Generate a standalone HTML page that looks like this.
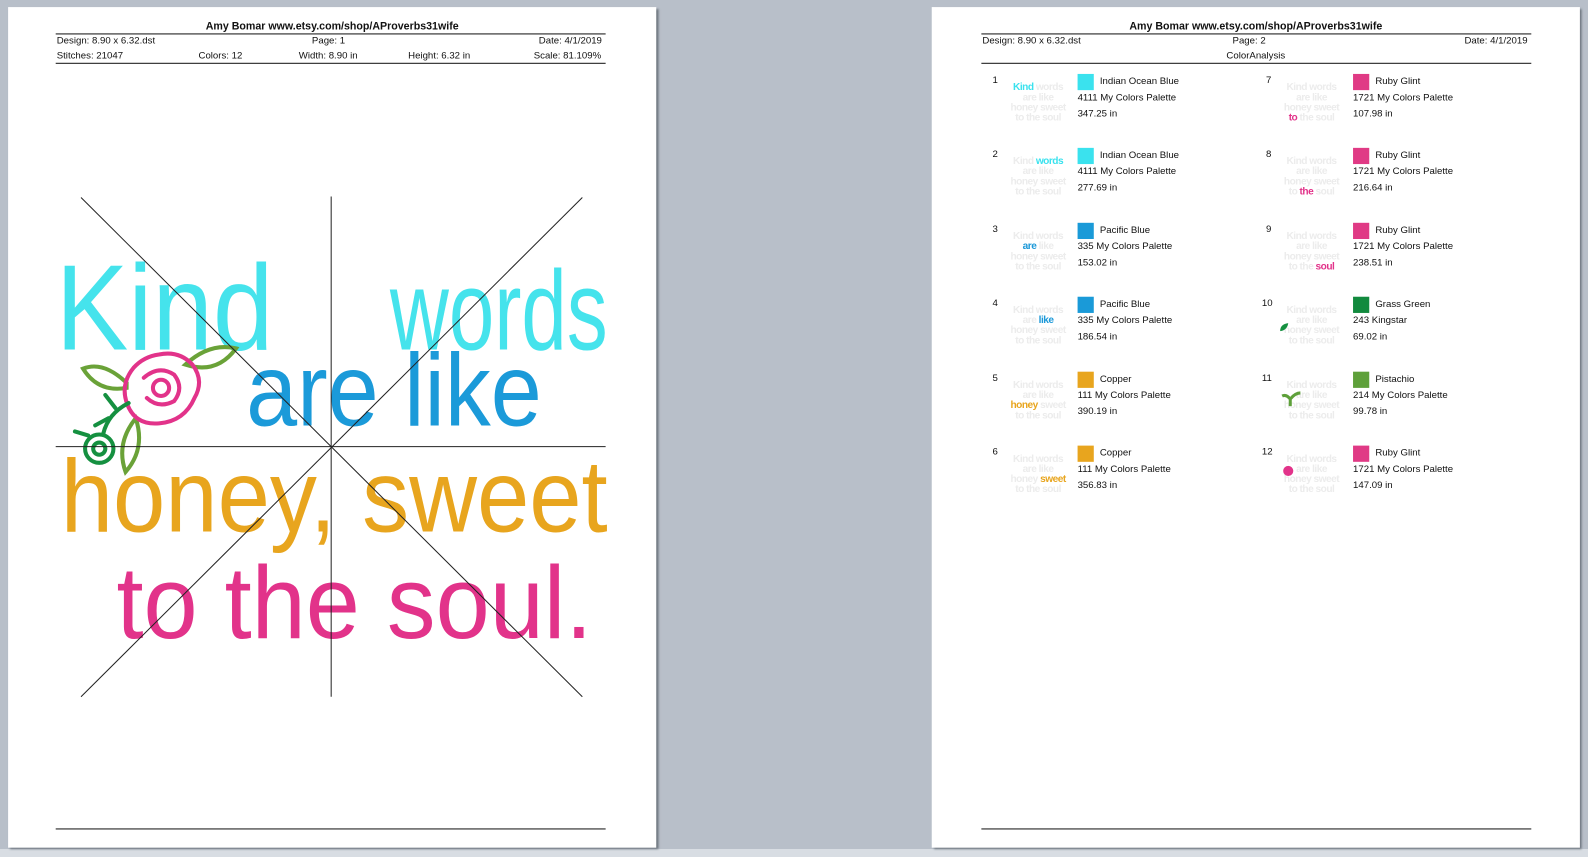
<!DOCTYPE html>
<html><head><meta charset="utf-8"><style>
*{margin:0;padding:0;box-sizing:border-box}
body{width:1588px;height:857px;background:#b8bfc9;position:relative;overflow:hidden;font-family:"Liberation Sans",Arial,sans-serif;color:#111}
#wrap{position:absolute;left:0;top:0;width:1568px;height:846px;transform:scale(1.01276);transform-origin:0 0}
.page{position:absolute;top:7px;width:640px;height:830px;background:#fff;box-shadow:2px 2px 2px #6b737c}
.t{position:absolute;font-size:9.5px;white-space:nowrap}
.hl{position:absolute;height:1px;background:#111}
.sw{position:absolute;width:16px;height:16px}
.thumb{position:absolute;width:78px;font-family:"Liberation Sans",sans-serif;font-size:10px;line-height:10px;color:#ececec;text-align:center;font-weight:bold;letter-spacing:-0.5px}
</style></head><body>
<div style="position:absolute;left:0;top:849px;width:1588px;height:8px;background:#d8dde3"></div>
<div id="wrap">
<div class="page" style="left:8px">
  <div class="t" style="left:0;width:640px;text-align:center;top:13px;font-weight:bold;font-size:10.5px">Amy Bomar www.etsy.com/shop/AProverbs31wife</div>
  <div class="hl" style="left:47px;width:543px;top:26px"></div>
  <div class="t" style="left:48px;top:28px">Design: 8.90 x 6.32.dst</div>
  <div class="t" style="left:300px;top:28px">Page: 1</div>
  <div class="t" style="left:524px;top:28px">Date: 4/1/2019</div>
  <div class="t" style="left:48px;top:43px">Stitches: 21047</div>
  <div class="t" style="left:188px;top:43px">Colors: 12</div>
  <div class="t" style="left:287px;top:43px">Width: 8.90 in</div>
  <div class="t" style="left:395px;top:43px">Height: 6.32 in</div>
  <div class="t" style="left:519px;top:43px">Scale: 81.109%</div>
  <div class="hl" style="left:47px;width:543px;top:55px"></div>
  <div class="hl" style="left:47px;width:543px;top:811px"></div>
  <svg style="position:absolute;left:0;top:0" width="640" height="830">
    <g font-family="Liberation Sans, sans-serif" font-weight="normal">
      <text x="47" y="338" font-size="120" fill="#45e3ec" textLength="215" lengthAdjust="spacingAndGlyphs">Kind</text>
      <text x="377" y="338" font-size="112" fill="#45e3ec" textLength="215" lengthAdjust="spacingAndGlyphs">words</text>
      <text x="235" y="413" font-size="102" fill="#1b9ad9" textLength="292" lengthAdjust="spacingAndGlyphs">are like</text>
      <text x="52" y="518" font-size="102" fill="#e8a51e" textLength="540" lengthAdjust="spacingAndGlyphs">honey, sweet</text>
      <text x="107" y="623" font-size="102" fill="#e2338a" textLength="470" lengthAdjust="spacingAndGlyphs">to the soul.</text>
    </g>
  </svg>
  <svg style="position:absolute;left:34px;top:331px" width="220" height="140" viewBox="0 0 220 140">
    <g fill="none" stroke-width="4" stroke-linecap="round">
      <path d="M141 22 Q165 0 191 6 Q172 32 141 22Z" stroke="#6aa238"/>
      <path d="M83 40 Q60 18 40 26 Q55 50 83 45Z" stroke="#6aa238"/>
      <path d="M92 75 Q72 100 82 128 Q102 105 92 75Z" stroke="#6aa238"/>
      <path d="M115 12 Q135 8 148 22 Q160 38 150 55 Q140 78 115 80 Q92 82 84 62 Q76 42 90 25 Q100 14 115 12Z" stroke="#e2338a"/>
      <path d="M100 35 Q115 22 130 32 Q140 45 130 58 Q115 66 103 55" stroke="#e2338a"/>
      <circle cx="117" cy="45" r="8" stroke="#e2338a"/>
      <path d="M85 60 Q65 70 60 90" stroke="#159040"/>
      <circle cx="56" cy="105" r="14" stroke="#159040"/>
      <circle cx="56" cy="105" r="6" stroke="#159040"/>
      <path d="M72 65 L62 52 M65 75 L52 82 M45 92 L32 88" stroke="#159040"/>
    </g>
  </svg>
  <svg style="position:absolute;left:0;top:0" width="640" height="830">
    <g stroke="#222" stroke-width="1">
      <line x1="319" y1="187" x2="319" y2="681"/>
      <line x1="47" y1="434" x2="590" y2="434"/>
      <line x1="72" y1="188" x2="567" y2="681"/>
      <line x1="567" y1="188" x2="72" y2="681"/>
    </g>
  </svg>
</div>
<div class="page" style="left:920px">
  <div class="t" style="left:0;width:640px;text-align:center;top:13px;font-weight:bold;font-size:10.5px">Amy Bomar www.etsy.com/shop/AProverbs31wife</div>
  <div class="hl" style="left:49px;width:543px;top:26px"></div>
  <div class="t" style="left:50px;top:28px">Design: 8.90 x 6.32.dst</div>
  <div class="t" style="left:297px;top:28px">Page: 2</div>
  <div class="t" style="left:526px;top:28px">Date: 4/1/2019</div>
  <div class="t" style="left:0;width:640px;text-align:center;top:43px">ColorAnalysis</div>
  <div class="hl" style="left:49px;width:543px;top:55px"></div>
  <div class="hl" style="left:49px;width:543px;top:811px"></div>
</div>
<div style="position:absolute;left:920px;top:7px">
<div class="t" style="left:60px;top:67px">1</div><div class="thumb" style="left:66px;top:75px"><span style="color:#3ae2ee">Kind</span> words<br>are like<br>honey sweet<br>to the soul</div><div class="sw" style="left:144px;top:66px;background:#3ae2ee"></div><div class="t" style="left:166px;top:68px">Indian Ocean Blue</div><div class="t" style="left:144px;top:84px">4111 My Colors Palette</div><div class="t" style="left:144px;top:100px">347.25 in</div>
<div class="t" style="left:60px;top:140px">2</div><div class="thumb" style="left:66px;top:148px">Kind <span style="color:#3ae2ee">words</span><br>are like<br>honey sweet<br>to the soul</div><div class="sw" style="left:144px;top:139px;background:#3ae2ee"></div><div class="t" style="left:166px;top:141px">Indian Ocean Blue</div><div class="t" style="left:144px;top:157px">4111 My Colors Palette</div><div class="t" style="left:144px;top:173px">277.69 in</div>
<div class="t" style="left:60px;top:214px">3</div><div class="thumb" style="left:66px;top:222px">Kind words<br><span style="color:#1b98d8">are</span> like<br>honey sweet<br>to the soul</div><div class="sw" style="left:144px;top:213px;background:#1a9ad8"></div><div class="t" style="left:166px;top:215px">Pacific Blue</div><div class="t" style="left:144px;top:231px">335 My Colors Palette</div><div class="t" style="left:144px;top:247px">153.02 in</div>
<div class="t" style="left:60px;top:287px">4</div><div class="thumb" style="left:66px;top:295px">Kind words<br>are <span style="color:#1b98d8">like</span><br>honey sweet<br>to the soul</div><div class="sw" style="left:144px;top:286px;background:#1a9ad8"></div><div class="t" style="left:166px;top:288px">Pacific Blue</div><div class="t" style="left:144px;top:304px">335 My Colors Palette</div><div class="t" style="left:144px;top:320px">186.54 in</div>
<div class="t" style="left:60px;top:361px">5</div><div class="thumb" style="left:66px;top:369px">Kind words<br>are like<br><span style="color:#e8a51e">honey</span> sweet<br>to the soul</div><div class="sw" style="left:144px;top:360px;background:#e8a51e"></div><div class="t" style="left:166px;top:362px">Copper</div><div class="t" style="left:144px;top:378px">111 My Colors Palette</div><div class="t" style="left:144px;top:394px">390.19 in</div>
<div class="t" style="left:60px;top:434px">6</div><div class="thumb" style="left:66px;top:442px">Kind words<br>are like<br>honey <span style="color:#e8a51e">sweet</span><br>to the soul</div><div class="sw" style="left:144px;top:433px;background:#e8a51e"></div><div class="t" style="left:166px;top:435px">Copper</div><div class="t" style="left:144px;top:451px">111 My Colors Palette</div><div class="t" style="left:144px;top:467px">356.83 in</div>

<div class="t" style="left:330px;top:67px">7</div><div class="thumb" style="left:336px;top:75px">Kind words<br>are like<br>honey sweet<br><span style="color:#e2338a">to</span> the soul</div><div class="sw" style="left:416px;top:66px;background:#e03a85"></div><div class="t" style="left:438px;top:68px">Ruby Glint</div><div class="t" style="left:416px;top:84px">1721 My Colors Palette</div><div class="t" style="left:416px;top:100px">107.98 in</div>
<div class="t" style="left:330px;top:140px">8</div><div class="thumb" style="left:336px;top:148px">Kind words<br>are like<br>honey sweet<br>to <span style="color:#e2338a">the</span> soul</div><div class="sw" style="left:416px;top:139px;background:#e03a85"></div><div class="t" style="left:438px;top:141px">Ruby Glint</div><div class="t" style="left:416px;top:157px">1721 My Colors Palette</div><div class="t" style="left:416px;top:173px">216.64 in</div>
<div class="t" style="left:330px;top:214px">9</div><div class="thumb" style="left:336px;top:222px">Kind words<br>are like<br>honey sweet<br>to the <span style="color:#e2338a">soul</span></div><div class="sw" style="left:416px;top:213px;background:#e03a85"></div><div class="t" style="left:438px;top:215px">Ruby Glint</div><div class="t" style="left:416px;top:231px">1721 My Colors Palette</div><div class="t" style="left:416px;top:247px">238.51 in</div>
<div class="t" style="left:326px;top:287px">10</div><div class="thumb" style="left:336px;top:295px">Kind words<br>are like<br>honey sweet<br>to the soul</div><svg style="position:absolute;left:342px;top:310px" width="12" height="12"><path d="M2 10 Q2 3 10 2 Q9 9 2 10Z" fill="#159040"/></svg><div class="sw" style="left:416px;top:286px;background:#128a3e"></div><div class="t" style="left:438px;top:288px">Grass Green</div><div class="t" style="left:416px;top:304px">243 Kingstar</div><div class="t" style="left:416px;top:320px">69.02 in</div>
<div class="t" style="left:326px;top:361px">11</div><div class="thumb" style="left:336px;top:369px">Kind words<br>are like<br>honey sweet<br>to the soul</div><svg style="position:absolute;left:344px;top:378px" width="22" height="18"><path d="M2 6 Q6 4 10 9 M10 9 Q15 3 20 3 M10 9 L10 16" stroke="#5ea03a" stroke-width="3" fill="none"/></svg><div class="sw" style="left:416px;top:360px;background:#5ea03a"></div><div class="t" style="left:438px;top:362px">Pistachio</div><div class="t" style="left:416px;top:378px">214 My Colors Palette</div><div class="t" style="left:416px;top:394px">99.78 in</div>
<div class="t" style="left:326px;top:434px">12</div><div class="thumb" style="left:336px;top:442px">Kind words<br>are like<br>honey sweet<br>to the soul</div><div style="position:absolute;left:347px;top:453px;width:10px;height:10px;border-radius:50%;background:#e2338a"></div><div class="sw" style="left:416px;top:433px;background:#e03a85"></div><div class="t" style="left:438px;top:435px">Ruby Glint</div><div class="t" style="left:416px;top:451px">1721 My Colors Palette</div><div class="t" style="left:416px;top:467px">147.09 in</div>
</div>
</div>
</body></html>
